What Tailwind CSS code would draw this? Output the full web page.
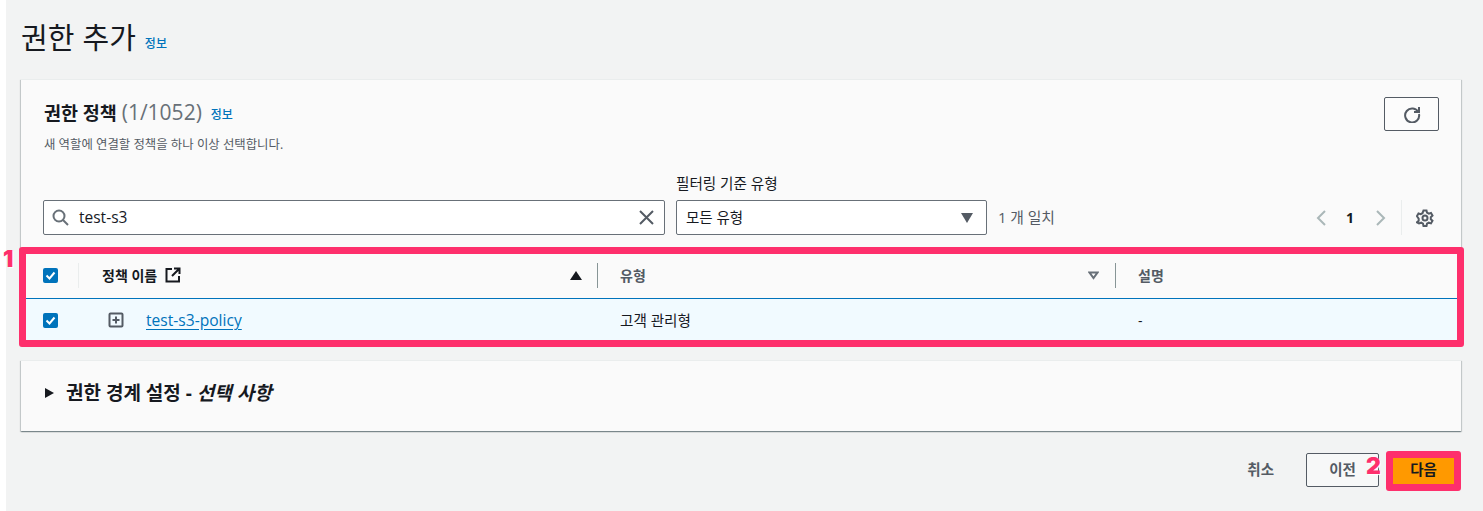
<!DOCTYPE html>
<html lang="ko">
<head>
  <meta charset="UTF-8">
  <title>권한 추가</title>
  <script src="https://cdn.jsdelivr.net/npm/@tailwindcss/browser@4"></script>
</head>
<body class="bg-white h-[511px] overflow-hidden font-['Open_Sans','Noto_Sans_CJK_KR',sans-serif] text-[#16191f]">
  <main class="relative ml-[6px] h-[511px] bg-[#f2f3f3] pl-[15px] pr-[22px]">

    <!-- title -->
    <div class="flex items-end h-[79px] pb-[25px]">
      <h1 class="text-[29px] leading-[36px] font-normal font-['Noto_Sans_CJK_KR',sans-serif]">권한 추가</h1>
      <a class="ml-[9px] mb-[3px] text-[12px] leading-[14px] font-medium text-[#0073bb]">정보</a>
    </div>

    <!-- policies card -->
    <section class="h-[266px] bg-[#fafafa] border-t border-[#eaeded] shadow-[0_1px_1px_0_rgba(0,28,36,0.3),1px_1px_1px_0_rgba(0,28,36,0.15),-1px_1px_1px_0_rgba(0,28,36,0.15)]">
      <div class="flex justify-between pl-[23px] pr-[22px] pt-[15px]">
        <div>
          <h2 class="text-[18.500px] leading-[34px] font-bold">권한 정책 <span class="text-[21px] font-normal text-[#687078]">(1/1052)</span><a class="ml-[9px] text-[12px] font-medium text-[#0073bb] align-[1px]">정보</a></h2>
          <p class="mt-[6px] text-[12.400px] leading-[14px] text-[#545b64]">새 역할에 연결할 정책을 하나 이상 선택합니다.</p>
        </div>
        <button class="mt-[2px] w-[55px] h-[34px] bg-white/40 border border-[#545b64] rounded-[2px] flex items-center justify-center">
          <svg width="18" height="18" viewBox="0 0 18 18" fill="none" stroke="#545b64" stroke-width="2"><path d="M15.500 7.500A7 7 0 1 0 16 9"/><path d="M16 2v5h-5"/></svg>
        </button>
      </div>

      <!-- filter row -->
      <div class="flex items-end pl-[22px] pr-[27px] mt-[22px]">
        <div class="w-[622px] h-[35px] bg-white border border-[#687078] rounded-[2px] flex items-center pl-[8px] pr-[9px]">
          <svg width="17" height="17" viewBox="0 0 17 17" fill="none" stroke="#687078" stroke-width="2"><circle cx="7" cy="7" r="5.500"/><path d="M11 11l5 5"/></svg>
          <span class="ml-[10px] text-[15.500px]">test-s3</span>
          <svg class="ml-auto" width="17" height="17" viewBox="0 0 17 17" fill="none" stroke="#545b64" stroke-width="2"><path d="M2 2l13 13M15 2L2 15"/></svg>
        </div>
        <div class="ml-[11px]">
          <label class="block mb-[8px] text-[14.600px] leading-[18px] text-[#16191f]">필터링 기준 유형</label>
          <div class="w-[311px] h-[35px] bg-white border border-[#687078] rounded-[2px] flex items-center pl-[9px] pr-[13px]">
            <span class="text-[14.500px]">모든 유형</span>
            <svg class="ml-auto" width="12" height="10" viewBox="0 0 12 10"><path d="M0 0h12L6 10z" fill="#545b64"/></svg>
          </div>
        </div>
        <span class="ml-[11px] h-[35px] text-[14.800px] leading-[35px] text-[#545b64]">1 개 일치</span>
        <div class="ml-auto h-[35px] flex items-center">
          <svg class="ml-[-1px]" width="12" height="18" viewBox="0 0 12 18" fill="none" stroke="#aab7b8" stroke-width="2"><path d="M10 2L3 9l7 7"/></svg>
          <span class="ml-[19px] mr-[21px] text-[14px] font-bold">1</span>
          <svg width="12" height="18" viewBox="0 0 12 18" fill="none" stroke="#aab7b8" stroke-width="2"><path d="M2 2l7 7-7 7"/></svg>
          <span class="ml-[14px] mr-[14px] h-[35px] border-l border-[#eaeded]"></span>
          <svg width="18" height="18" viewBox="0 0 18 18" fill="none" stroke="#545b64" stroke-width="2"><circle cx="9" cy="9" r="2.500"/><path d="M7.500 1.500h3l.5 2.200 1.800 1 2.200-.7 1.500 2.600-1.700 1.600v2l1.700 1.600-1.500 2.600-2.200-.7-1.800 1-.5 2.300h-3l-.5-2.300-1.800-1-2.200.7L1 13.300l1.700-1.600v-2L1 7.100 2.500 4.500l2.200.7 1.800-1z"/></svg>
        </div>
      </div>

      <!-- table -->
      <div class="mt-[16px] text-[14px]">
        <div class="flex items-center h-[48px] pt-[1px] border-b border-[#0073bb] font-bold text-[#16191f]">
          <div class="w-[58px] pl-[22px] h-[25px] flex items-center border-r border-[#eaeded]">
            <span class="w-[15px] h-[15px] rounded-[2px] bg-[#0073bb] flex items-center justify-center"><svg width="11" height="11" viewBox="0 0 11 11" fill="none" stroke="white" stroke-width="2"><path d="M1.500 5.500l3 3 5-6"/></svg></span>
          </div>
          <div class="w-[519px] h-[25px] pl-[23px] pr-[15px] flex items-center border-r border-[#879596]">
            <span>정책 이름</span>
            <svg class="ml-[8px]" width="16" height="16" viewBox="0 0 16 16" fill="none" stroke="#16191f" stroke-width="2"><path d="M7 2H1.500v12.500H14V9M9 1.500h5.500V7M14.500 1.500L7 9"/></svg>
            <svg class="ml-auto" width="12" height="9" viewBox="0 0 12 9"><path d="M0 9h12L6 0z" fill="#16191f"/></svg>
          </div>
          <div class="w-[518px] h-[25px] pl-[22px] pr-[16px] flex items-center border-r border-[#879596] text-[#545b64]">
            <span>유형</span>
            <svg class="ml-auto" width="11" height="9" viewBox="0 0 11 9" fill="none" stroke="#687078" stroke-width="2"><path d="M1.500 1.500h8L5.500 7z"/></svg>
          </div>
          <div class="pl-[22px] text-[#545b64]">설명</div>
        </div>
        <div class="flex items-center h-[43px] bg-[#f1faff]">
          <div class="w-[58px] pl-[22px] flex items-center">
            <span class="w-[15px] h-[15px] rounded-[2px] bg-[#0073bb] flex items-center justify-center"><svg width="11" height="11" viewBox="0 0 11 11" fill="none" stroke="white" stroke-width="2"><path d="M1.500 5.500l3 3 5-6"/></svg></span>
          </div>
          <div class="w-[519px] flex items-center">
            <svg class="ml-[29px]" width="16" height="16" viewBox="0 0 16 16" fill="none" stroke="#545b64" stroke-width="2"><rect x="1.500" y="1.500" width="13" height="13" rx="1"/><path d="M8 4.500v7M4.500 8h7"/></svg>
            <a class="ml-[22px] text-[15.600px] text-[#0073bb] underline underline-offset-[3px]">test-s3-policy</a>
          </div>
          <div class="w-[518px] pl-[22px] text-[14.600px] text-[#16191f]">고객 관리형</div>
          <div class="pl-[22px]">-</div>
        </div>
      </div>
    </section>

    <!-- boundary card -->
    <section class="mt-[15px] h-[71px] pb-[6px] bg-[#fafafa] border-t border-[#eaeded] flex items-center pl-[24px] shadow-[0_1px_1px_0_rgba(0,28,36,0.3),1px_1px_1px_0_rgba(0,28,36,0.15),-1px_1px_1px_0_rgba(0,28,36,0.15)]">
      <svg width="9" height="10" viewBox="0 0 9 10"><path d="M0 0l9 5-9 5z" fill="#16191f"/></svg>
      <h2 class="ml-[12px] text-[19px] font-bold">권한 경계 설정 - <em>선택 사항</em></h2>
    </section>

    <!-- footer buttons -->
    <div class="mt-[22px] flex items-center justify-end pr-[2px] text-[14.500px] font-bold">
      <button class="text-[#545b64] mr-[32px]">취소</button>
      <button class="w-[73px] h-[34px] bg-white/40 border border-[#545b64] rounded-[2px] text-[#545b64]">이전</button>
      <button class="ml-[9px] w-[71px] h-[34px] bg-[#ff9900] text-[#16191f]">다음</button>
    </div>

    <!-- annotations over the screenshot -->
    <div class="absolute left-[13px] top-[247px] w-[1445px] h-[100px] border-[7px] border-[#fe2f6c] rounded-[3px]"></div>
    <span class="absolute left-[-3px] top-[246px] text-[23px] leading-[26px] font-black text-[#fe2f6c] font-['Inter',sans-serif] [text-shadow:1px_1px_1px_white]">1</span>
    <div class="absolute left-[1380px] top-[451px] w-[75px] h-[40px] border-[7px] border-[#fe2f6c] rounded-[3px]"></div>
    <span class="absolute left-[1360px] top-[453px] text-[23px] leading-[26px] font-black text-[#fe2f6c] font-['Inter',sans-serif] [text-shadow:1px_1px_1px_white]">2</span>
  </main>
</body>
</html>
